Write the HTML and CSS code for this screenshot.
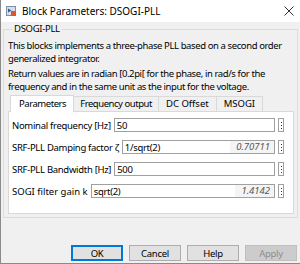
FILE: index.html
```html
<!DOCTYPE html>
<html lang="en">
<head>
    <meta charset="UTF-8">
    <title>Block Parameters: DSOGI-PLL</title>
    <link rel="stylesheet" href="styles.css">
</head>
<body>
    <div class="dialog">
        <div class="titlebar">
            <svg class="app-icon" width="10" height="10" viewBox="0 0 10 10">
                <rect x="0.5" y="0.5" width="9" height="9" fill="#d6dee8" stroke="#7d8ea5"/>
                <path d="M2 2.5 L5.5 4.5 L2 6.5 Z" fill="#2e5f9a"/>
                <rect x="5" y="5" width="5" height="5" fill="#e2532b"/>
            </svg>
            <span class="title">Block Parameters: DSOGI-PLL</span>
            <svg class="close" width="10" height="10" viewBox="0 0 10 10">
                <path d="M0.5 0.5 L9.5 9.5 M9.5 0.5 L0.5 9.5" stroke="#333" stroke-width="1"/>
            </svg>
        </div>

        <div class="content">
            <fieldset class="group">
                <legend>DSOGI-PLL</legend>
                <p>This blocks implements a three-phase PLL based on a second order<br>generalized integrator.</p>
                <p>Return values are in radian [0.2pi[ for the phase, in rad/s for the<br>frequency and in the same unit as the input for the voltage.</p>

                <div class="tabs">
                    <div class="tab active">Parameters</div>
                    <div class="tab">Frequency output</div>
                    <div class="tab short">DC Offset</div>
                    <div class="tab short">MSOGI</div>
                </div>
                <div class="panel">
                    <div class="row">
                        <label>Nominal frequency [Hz]</label>
                        <div class="field"><span class="val">50</span></div>
                        <span class="more"><i></i><i></i><i></i></span>
                    </div>
                    <div class="row">
                        <label>SRF-PLL Damping factor ζ</label>
                        <div class="field"><span class="val">1/sqrt(2)</span><span class="eval">0.70711</span></div>
                        <span class="more"><i></i><i></i><i></i></span>
                    </div>
                    <div class="row">
                        <label>SRF-PLL Bandwidth [Hz]</label>
                        <div class="field"><span class="val">500</span></div>
                        <span class="more"><i></i><i></i><i></i></span>
                    </div>
                    <div class="row">
                        <label class="wide">SOGI filter gain k</label>
                        <div class="field"><span class="val">sqrt(2)</span><span class="eval">1.4142</span></div>
                        <span class="more"><i></i><i></i><i></i></span>
                    </div>
                </div>
            </fieldset>

            <div class="buttons">
                <button class="default">OK</button>
                <button>Cancel</button>
                <button>Help</button>
                <button disabled>Apply</button>
            </div>
        </div>
    </div>
</body>
</html>
```

FILE: styles.css
```css
body {
    margin: 0;
    width: 300px;
    height: 264px;
    overflow: hidden;
    font-family: "Noto Sans", sans-serif;
    font-size: 9.5px;
    letter-spacing: -0.3px;
    color: #000;
    background: #fff;
}

.dialog {
    height: 264px;
    box-sizing: border-box;
    border-left: 1px solid #8a8a8a;
    border-bottom: 1px solid #8a8a8a;
    background: #f0f0f0;
    display: flex;
    flex-direction: column;
}

.titlebar {
    height: 22px;
    flex: none;
    background: #fff;
    display: flex;
    align-items: center;
    padding-left: 5px;
    gap: 6px;
}

.title {
    font-size: 10px;
    letter-spacing: 0;
}

.close {
    margin-left: auto;
    margin-right: 6px;
}

.content {
    flex: 1;
    display: flex;
    flex-direction: column;
    padding: 1px 2px 0 2px;
}

.group {
    margin: 0;
    border: 1px solid #dcdcdc;
    padding: 0 3px 3px 4px;
}

.group legend {
    padding: 0 2px;
    margin-left: 4px;
    line-height: 12px;
}

.group p {
    margin: 0 0 2px;
    line-height: 13px;
    letter-spacing: -0.4px;
    white-space: nowrap;
}

.group p:first-of-type {
    margin-top: 4px;
}

.tabs {
    display: flex;
    align-items: flex-end;
    margin-top: 1px;
    height: 16px;
    padding-left: 2px;
    letter-spacing: -0.45px;
}

.tab {
    height: 14px;
    line-height: 14px;
    padding: 0 6px;
    border: 1px solid #d9d9d9;
    border-bottom: none;
    margin-left: -1px;
    background: #f0f0f0;
}

.tab.short {
    padding: 0 7px;
    letter-spacing: 0;
}

.tab.active {
    height: 16px;
    line-height: 15px;
    padding: 0 7px 0 8px;
    background: #fff;
    margin-left: 0;
    position: relative;
    z-index: 1;
    margin-bottom: -1px;
}

.panel {
    background: #fff;
    border: 1px solid #d9d9d9;
    padding: 6px 9px 15px 3px;
    display: flex;
    flex-direction: column;
    gap: 8px;
}

.row {
    display: flex;
    align-items: center;
    height: 14px;
}

.row label {
    white-space: nowrap;
    margin-right: 3px;
}

.row label.wide {
    letter-spacing: 0;
}

.field {
    flex: 1;
    height: 14px;
    box-sizing: border-box;
    border: 1px solid #a0a0a0;
    display: flex;
    align-items: center;
    background: #fff;
}

.val {
    flex: 1;
    padding-left: 2px;
}

.eval {
    font-style: italic;
    color: #555;
    background: #f4f4f4;
    align-self: stretch;
    line-height: 12px;
    padding: 0 4px 0 6px;
    letter-spacing: 0;
}

.more {
    width: 6px;
    height: 14px;
    box-sizing: border-box;
    margin-left: 3px;
    border: 1px solid #a0a0a0;
    display: flex;
    flex-direction: column;
    align-items: center;
    justify-content: center;
    gap: 2px;
    background: #fff;
}

.more i {
    width: 1px;
    height: 1px;
    background: #333;
}

.buttons {
    margin-top: auto;
    margin-bottom: 2px;
    display: flex;
    justify-content: flex-end;
    gap: 6px;
    padding-right: 1px;
}

.buttons button {
    width: 52px;
    height: 16px;
    padding: 0;
    font-family: inherit;
    font-size: 9.5px;
    letter-spacing: -0.3px;
    background: #e1e1e1;
    border: 1px solid #adadad;
    color: #000;
}

.buttons button.default {
    border-color: #0078d7;
    box-shadow: inset 0 0 0 1px #0078d7;
}

.buttons button:disabled {
    background: #cccccc;
    border-color: #bfbfbf;
    color: #8d8d8d;
}
```
